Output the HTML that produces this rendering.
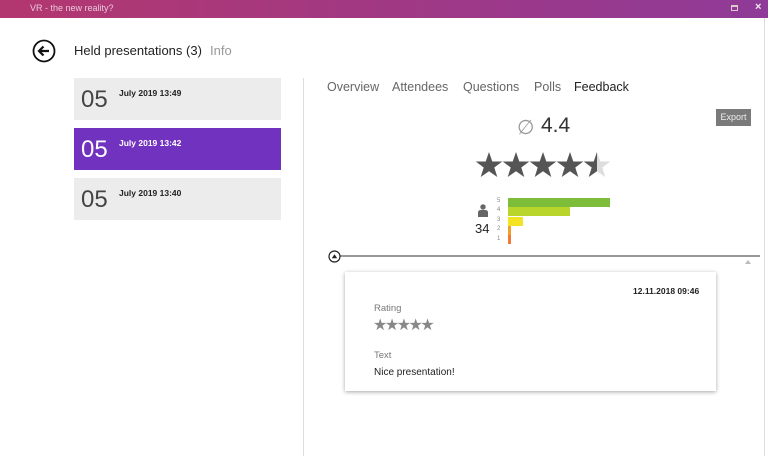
<!DOCTYPE html>
<html><head><meta charset="utf-8"><style>
*{margin:0;padding:0;box-sizing:border-box}
body{width:768px;height:456px;overflow:hidden;background:#fff;font-family:"Liberation Sans",sans-serif;position:relative;color:#222}
.a{position:absolute;white-space:nowrap}
.tb{left:0;top:0;width:768px;height:18px;background:linear-gradient(90deg,#b3376f,#8f3a98)}
.item{position:absolute;left:74px;width:207px;height:42px;background:#ececec}
.item .n{position:absolute;left:7px;top:8px;font-size:24px;color:#444}
.item .d{position:absolute;left:45px;top:10px;font-size:8.5px;font-weight:bold;color:#222}
.sel{background:#7232c0}.sel .n,.sel .d{color:#fff}
.tab{position:absolute;top:80px;font-size:12.5px;color:#666}
.bar{position:absolute;left:508px;height:9px}
.lbl{position:absolute;left:497px;font-size:6px;color:#888}
</style></head><body>
<div class="a tb"></div>
<div class="a" style="left:30px;top:3px;font-size:9px;color:#e9c9dc">VR - the new reality?</div>
<div class="a" style="left:731px;top:5px;width:7px;height:6px;border:1px solid #dcc;border-top-width:2px"></div>
<div class="a" style="left:755px;top:1px;font-size:11px;color:#eee;font-weight:bold">×</div>
<div class="a" style="left:764px;top:18px;width:1px;height:438px;background:#ddd"></div>

<svg class="a" style="left:32px;top:39px" width="24" height="24" viewBox="0 0 24 24"><circle cx="12" cy="12" r="10.5" fill="none" stroke="#111" stroke-width="1.8"/><path d="M17 12H7.5M11.5 7.5L7 12l4.5 4.5" fill="none" stroke="#111" stroke-width="2.2"/></svg>
<div class="a" style="left:74px;top:43px;font-size:13px;color:#222">Held presentations (3)</div>
<div class="a" style="left:210px;top:43px;font-size:13px;color:#999">Info</div>

<div class="item" style="top:78px"><span class="n">05</span><span class="d">July 2019 13:49</span></div>
<div class="item sel" style="top:128px"><span class="n">05</span><span class="d">July 2019 13:42</span></div>
<div class="item" style="top:178px"><span class="n">05</span><span class="d">July 2019 13:40</span></div>

<div class="a" style="left:303px;top:78px;width:1px;height:378px;background:#ddd"></div>

<div class="tab" style="left:327px">Overview</div>
<div class="tab" style="left:392px">Attendees</div>
<div class="tab" style="left:463px">Questions</div>
<div class="tab" style="left:534px">Polls</div>
<div class="tab" style="left:574px;color:#222">Feedback</div>

<div class="a" style="left:716px;top:109px;width:35px;height:17px;background:#7a7a7a;color:#eee;font-size:9px;text-align:center;line-height:17px">Export</div>

<div class="a" style="left:517px;top:115px;font-size:20px;color:#999">∅</div>
<div class="a" style="left:541px;top:114px;font-size:21px;color:#333">4.4</div>

<svg class="a" style="left:475px;top:151px" width="140" height="30" viewBox="0 0 140 30">
<defs><linearGradient id="h"><stop offset="50%" stop-color="#555"/><stop offset="50%" stop-color="#ddd"/></linearGradient>
<path id="s" d="M14 1l3.3 9.5h10l-8 6 3 9.5-8.3-5.8-8.3 5.8 3-9.5-8-6h10z"/></defs>
<use href="#s" x="0" fill="#555"/><use href="#s" x="27" fill="#555"/><use href="#s" x="54" fill="#555"/><use href="#s" x="81" fill="#555"/><use href="#s" x="108" fill="url(#h)"/>
</svg>

<div class="lbl" style="top:198px">5</div><div class="lbl" style="top:207px">4</div><div class="lbl" style="top:217px">3</div><div class="lbl" style="top:226px">2</div><div class="lbl" style="top:236px">1</div>
<div class="bar" style="top:198px;width:102px;background:#7dbd3a"></div>
<div class="bar" style="top:207px;width:62px;background:#b9d42a"></div>
<div class="bar" style="top:217px;width:15px;background:#f3e322"></div>
<div class="bar" style="top:226px;width:3px;background:#f0a030"></div>
<div class="bar" style="top:235px;width:3px;background:#f07a3a"></div>
<svg class="a" style="left:477px;top:204px" width="12" height="13" viewBox="0 0 12 13"><circle cx="6" cy="3" r="2.7" fill="#666"/><path d="M1 13V8.5Q1 6 4 6h4q3 0 3 2.5V13z" fill="#666"/></svg>
<div class="a" style="left:475px;top:221px;font-size:13px;color:#222">34</div>

<div class="a" style="left:340px;top:255px;width:420px;height:1.5px;background:#999"></div>
<svg class="a" style="left:328px;top:250px" width="13" height="13" viewBox="0 0 13 13"><circle cx="6.5" cy="6.5" r="5.5" fill="#fff" stroke="#222" stroke-width="1.2"/><path d="M3.8 8.3L6.5 4.2 9.2 8.3z" fill="#222"/></svg>
<div class="a" style="left:745px;top:260px;width:0;height:0;border-left:3px solid transparent;border-right:3px solid transparent;border-bottom:4px solid #bbb"></div>

<div class="a" style="left:345px;top:272px;width:371px;height:119px;background:#fff;box-shadow:0 1px 4px rgba(0,0,0,.35)"></div>
<div class="a" style="left:633px;top:286px;font-size:8.5px;font-weight:bold;color:#222">12.11.2018 09:46</div>
<div class="a" style="left:374px;top:303px;font-size:9.5px;color:#777">Rating</div>
<div class="a" style="left:373px;top:315px;font-size:16px;color:#888;letter-spacing:-2.5px">★★★★★</div>
<div class="a" style="left:374px;top:350px;font-size:9.5px;color:#777">Text</div>
<div class="a" style="left:374px;top:367px;font-size:10px;color:#222">Nice presentation!</div>
</body></html>
